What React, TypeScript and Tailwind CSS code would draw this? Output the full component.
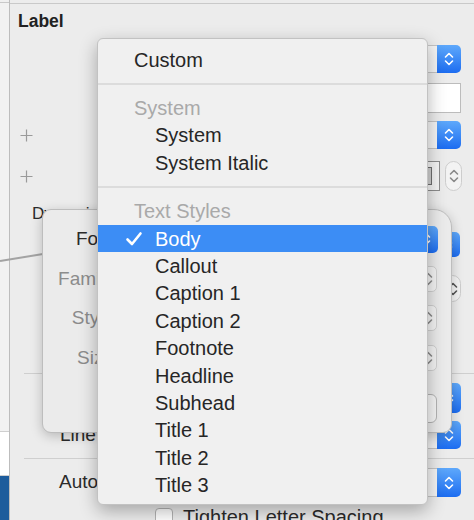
import React from "react";

const MENU = [
  { kind: "item", label: "Custom", indent: "pl-[36px]" },
  { kind: "sep" },
  { kind: "header", label: "System" },
  { kind: "item", label: "System", indent: "pl-[57px]" },
  { kind: "item", label: "System Italic", indent: "pl-[57px]" },
  { kind: "sep" },
  { kind: "header", label: "Text Styles" },
  { kind: "item", label: "Body", indent: "pl-[57px]", selected: true },
  { kind: "item", label: "Callout", indent: "pl-[57px]" },
  { kind: "item", label: "Caption 1", indent: "pl-[57px]" },
  { kind: "item", label: "Caption 2", indent: "pl-[57px]" },
  { kind: "item", label: "Footnote", indent: "pl-[57px]" },
  { kind: "item", label: "Headline", indent: "pl-[57px]" },
  { kind: "item", label: "Subhead", indent: "pl-[57px]" },
  { kind: "item", label: "Title 1", indent: "pl-[57px]" },
  { kind: "item", label: "Title 2", indent: "pl-[57px]" },
  { kind: "item", label: "Title 3", indent: "pl-[57px]" },
];

const POPOVER_ROWS = [
  { label: "Font", enabled: true },
  { label: "Family" },
  { label: "Style" },
  { label: "Size" },
];

function Chevrons({ className }: { className?: string }) {
  return (
    <svg width="12" height="18" viewBox="0 0 12 18" fill="none" className={className}>
      <path d="M2.5 7 L6 3.5 L9.5 7" stroke="currentColor" strokeWidth="1.6" strokeLinecap="round" strokeLinejoin="round" />
      <path d="M2.5 11 L6 14.5 L9.5 11" stroke="currentColor" strokeWidth="1.6" strokeLinecap="round" strokeLinejoin="round" />
    </svg>
  );
}

function BlueEnd() {
  return (
    <div className="w-[24px] h-full rounded-r-[5px] bg-linear-to-b from-[#5ea8fb] to-[#1c6cf0] flex items-center justify-center text-white">
      <Chevrons />
    </div>
  );
}

function PopupField({ height }: { height: string }) {
  return (
    <div className={`flex ${height}`}>
      <div className="w-[150px] bg-[#f5f5f5] border border-r-0 border-[#c4c4c4] rounded-l-[5px]" />
      <BlueEnd />
    </div>
  );
}

function Stepper({ tone }: { tone: string }) {
  return (
    <div className={`w-[17px] h-full rounded-full border border-[#cdcdcd] bg-[#f3f3f3] flex items-center justify-center ${tone}`}>
      <Chevrons />
    </div>
  );
}

function Plus() {
  return (
    <svg width="13" height="13" viewBox="0 0 13 13" className="text-[#9a9a9a]">
      <path d="M6.5 0.5 V12.5 M0.5 6.5 H12.5" stroke="currentColor" strokeWidth="1.2" />
    </svg>
  );
}

function Panel() {
  return (
    <div className="flex h-full">
      <div className="w-[10px] shrink-0 flex flex-col border-r border-[#bdbdbd] bg-[#fbfbfb]">
        <div className="h-[3px] border-b border-[#c9c9c9] bg-[#f0f0f0]" />
        <div className="h-[428px] bg-[#f2f2f2]" />
        <div className="h-[44px] border-t border-[#cfcfcf] bg-white" />
        <div className="flex-1 border-t border-[#cfcfcf] bg-[#1d5c9c]" />
      </div>
      <div className="flex-1 mt-[3px] border-t border-[#c9c9c9] bg-[#ececec] text-[#2b2b2b]">
        <div className="h-[34px] flex items-center pl-[8px] text-[17.5px] font-bold text-[#222]">Label</div>

        <div className="mt-[7px] h-[28px] flex justify-end pr-[13px]">
          <PopupField height="h-[28px]" />
        </div>

        <div className="mt-[10px] h-[30px] flex justify-end pr-[13px]">
          <div className="w-[170px] h-full bg-white border border-[#bcbcbc]" />
        </div>

        <div className="mt-[8px] h-[28px] flex items-center justify-between pl-[10px] pr-[13px]">
          <Plus />
          <PopupField height="h-[28px]" />
        </div>

        <div className="mt-[12px] h-[30px] flex items-center justify-between pl-[10px] pr-[12px]">
          <Plus />
          <div className="flex h-full items-center gap-[5px]">
            <div className="w-[130px] h-full border border-[#8c8c8c] bg-[#f4f4f4] flex items-center justify-end pr-[7px]">
              <div className="w-[7px] h-[18px] border border-[#6f6f6f] bg-[#cfcfcf]" />
            </div>
            <Stepper tone="text-[#8a8a8a]" />
          </div>
        </div>

        <div className="mt-[13px] h-[20px] flex items-center pl-[22px] text-[17px]">Dynamic Type</div>

        <div className="mt-[8px] h-[25px] flex justify-end pr-[14px]">
          <PopupField height="h-[25px]" />
        </div>

        <div className="mt-[18px] h-[27px] flex justify-end pr-[13px]">
          <Stepper tone="text-[#555]" />
        </div>

        <div className="mt-[71px] ml-[14px] border-t border-[#cfcfcf]" />

        <div className="mt-[9px] h-[30px] flex justify-end pr-[13px]">
          <PopupField height="h-[30px]" />
        </div>

        <div className="mt-[8px] h-[28px] flex items-center justify-between pl-[50px] pr-[13px] text-[19px]">
          <span>Line</span>
          <PopupField height="h-[28px]" />
        </div>

        <div className="mt-[9px] ml-[14px] border-t border-[#cfcfcf]" />

        <div className="mt-[9px] h-[29px] flex items-center justify-between pl-[49px] pr-[13px] text-[19px]">
          <span>Auto</span>
          <PopupField height="h-[29px]" />
        </div>

        <div className="mt-[10px] h-[20px] flex items-center gap-[10px] pl-[145px] text-[20px]">
          <div className="w-[18px] h-[18px] rounded-[4px] border border-[#b3b3b3] bg-white shrink-0" />
          <span className="whitespace-nowrap">Tighten Letter Spacing</span>
        </div>
      </div>
    </div>
  );
}

function FontPopover() {
  return (
    <div className="absolute left-[42px] top-[209px] w-[410px] h-[224px] rounded-[9px] rounded-tr-[18px] border border-[#bdbdbd] bg-[#ebebeb] shadow-[0_3px_12px_rgba(0,0,0,0.22)] pt-[9.5px] pr-[14px]">
      {POPOVER_ROWS.map((row) => (
        <div key={row.label} className="h-[39.5px] flex items-center justify-between">
          <span className={`w-[71px] text-right text-[19px] ${row.enabled ? "text-[#2b2b2b]" : "text-[#8c8c8c]"}`}>
            {row.label}
          </span>
          {row.enabled ? (
            <div className="mr-[-1px]">
              <PopupField height="h-[27px]" />
            </div>
          ) : (
            <div className="w-[200px] h-[26px] rounded-[5px] border border-[#d0d0d0] bg-[#f4f4f4] flex items-center justify-end pr-[2px] text-[#8c8c8c]">
              <Chevrons />
            </div>
          )}
        </div>
      ))}
      <div className="mt-[16.5px] h-[29px] flex justify-end">
        <div className="w-[120px] h-full rounded-[6px] border border-[#b3b3b3] bg-[#f6f6f6]" />
      </div>
    </div>
  );
}

function Check() {
  return (
    <svg width="18" height="18" viewBox="0 0 18 18" fill="none" className="absolute left-[27px]">
      <path d="M2.5 9.5 L7 14 L15.5 3.5" stroke="white" strokeWidth="2.6" strokeLinecap="round" strokeLinejoin="round" />
    </svg>
  );
}

function FontMenu() {
  return (
    <div className="absolute left-[97px] top-[38px] w-[331px] h-[467px] rounded-[6px] border border-[#c2c2c2] bg-[#f0f0f0] shadow-[0_6px_18px_rgba(0,0,0,0.3)] pt-[7px] text-[20px] overflow-hidden">
      {MENU.map((m, i) => {
        if (m.kind === "sep") {
          return (
            <div key={i} className="h-[21px] flex items-center">
              <div className="w-full h-[2px] bg-[#dcdcdc]" />
            </div>
          );
        }
        if (m.kind === "header") {
          return (
            <div key={i} className="h-[27.4px] flex items-center pl-[36px] text-[#a9a9a9]">
              {m.label}
            </div>
          );
        }
        return (
          <div
            key={i}
            className={`relative h-[27.4px] flex items-center ${m.indent} ${m.selected ? "bg-[#3c8df5] text-white" : "text-[#262626]"}`}
          >
            {m.selected && <Check />}
            {m.label}
          </div>
        );
      })}
    </div>
  );
}

export default function App() {
  return (
    <div className="relative w-[474px] h-[520px] overflow-hidden bg-[#ececec] font-['Liberation_Sans',Arial,sans-serif]">
      <Panel />
      <svg width="44" height="12" viewBox="0 0 44 12" className="absolute left-0 top-[251px]">
        <path d="M0 10 L43 3" stroke="#a3a3a3" strokeWidth="2" />
      </svg>
      <FontPopover />
      <FontMenu />
    </div>
  );
}
